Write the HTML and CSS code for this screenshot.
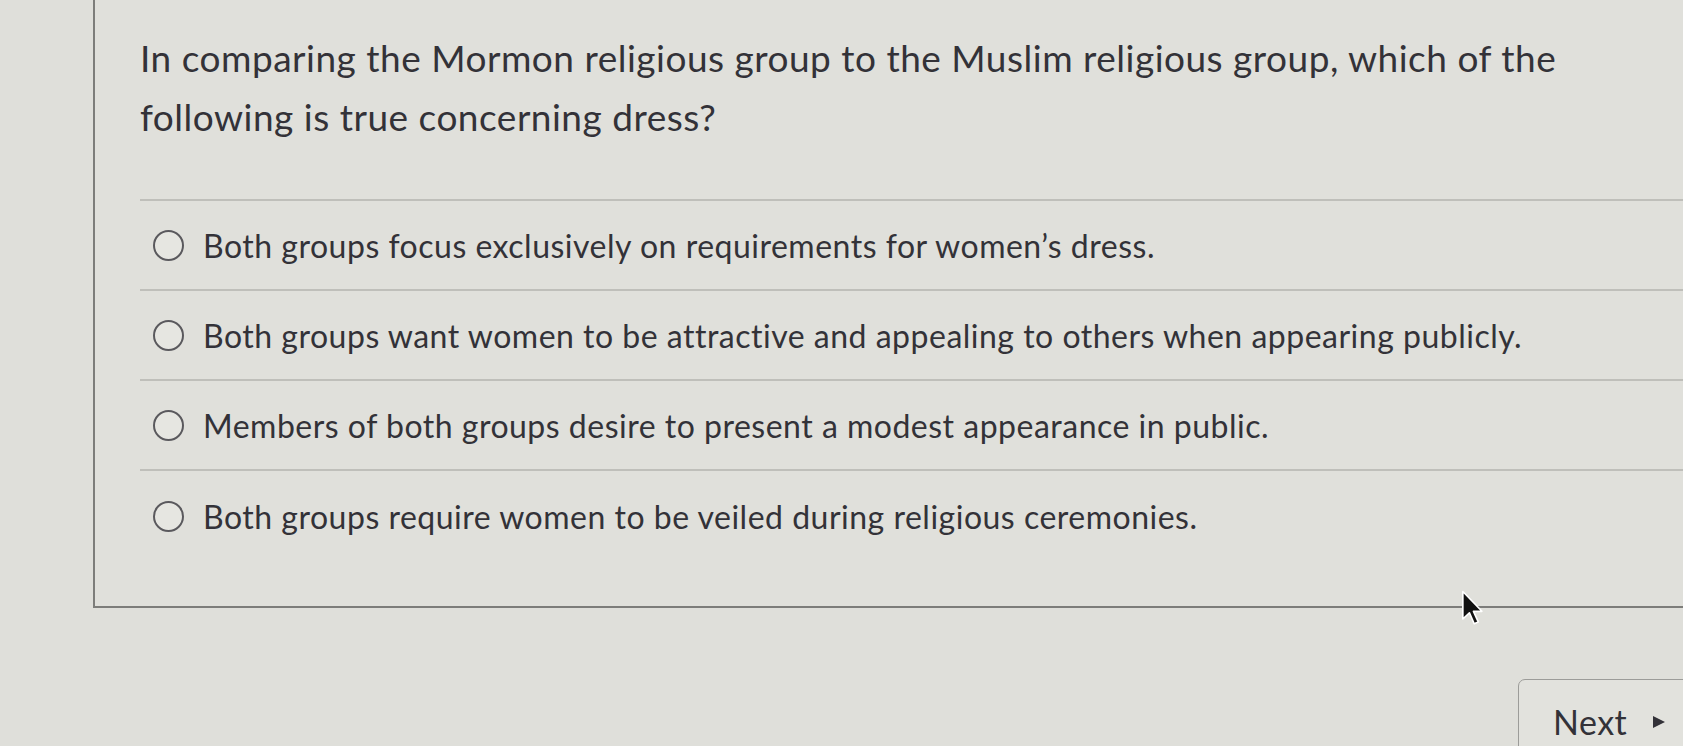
FILE: index.html
```html
<!DOCTYPE html>
<html lang="en">
<head>
<meta charset="utf-8">
<title>Question</title>
<link rel="stylesheet" href="styles.css">
</head>
<body>
<div class="page">
  <div class="card">
    <p class="question">In comparing the Mormon religious group to the Muslim religious group, which of the following is true concerning dress?</p>
    <ul class="options">
      <li class="option"><span class="radio"></span><span class="label">Both groups focus exclusively on requirements for women’s dress.</span></li>
      <li class="option"><span class="radio"></span><span class="label">Both groups want women to be attractive and appealing to others when appearing publicly.</span></li>
      <li class="option"><span class="radio"></span><span class="label">Members of both groups desire to present a modest appearance in public.</span></li>
      <li class="option"><span class="radio"></span><span class="label">Both groups require women to be veiled during religious ceremonies.</span></li>
    </ul>
  </div>
  <div class="footer">
    <button class="next">Next <svg class="tri" width="12" height="12" viewBox="0 0 12 12"><path d="M0 0 L12 6 L0 12 Z" fill="#333238"/></svg></button>
  </div>
</div>
<svg class="cursor" width="22" height="38" viewBox="0 0 12 20"><path d="M1 1 L1 16 L4.6 12.6 L7.2 18.6 L9.4 17.6 L6.8 11.8 L11.4 11.8 Z" fill="#111" stroke="#fff" stroke-width="0.9" stroke-linejoin="round"/></svg>
</body>
</html>
```

FILE: styles.css
```css
html, body {
  margin: 0;
  padding: 0;
  height: 100%;
  overflow: hidden;
  background: #dfdfda;
}
body {
  font-family: Lato, "Open Sans", sans-serif;
  color: #333238;
  position: relative;
}
.page {
  padding-left: 93px;
}
.card {
  width: 1650px;
  height: 608px;
  box-sizing: border-box;
  border-left: 2px solid #7d7d7a;
  border-bottom: 2px solid #7d7d7a;
  padding-left: 45px;
  background: #e0e0db;
}
.question {
  margin: 0;
  padding-top: 28px;
  font-size: 37px;
  letter-spacing: 0.5px;
  line-height: 59px;
  width: 1460px;
}
.options {
  list-style: none;
  margin: 53px 0 0 0;
  padding: 0;
  border-top: 2px solid #bfbfba;
}
.option {
  height: 90px;
  box-sizing: border-box;
  display: flex;
  align-items: center;
  padding-left: 13px;
  gap: 19px;
  font-size: 32px;
  letter-spacing: 0.5px;
  border-bottom: 2px solid #bfbfba;
}
.option:last-child {
  border-bottom: none;
}
.radio {
  width: 27px;
  height: 27px;
  border: 2.3px solid #5a595d;
  border-radius: 50%;
  flex: none;
  background: #e6e6e1;
}
.footer {
  display: flex;
  justify-content: flex-end;
  margin-top: 71px;
}
.next {
  font-family: Lato, "Open Sans", sans-serif;
  font-size: 34px;
  letter-spacing: 0.5px;
  line-height: 40px;
  color: #333238;
  background: #e2e2dd;
  border: 1.5px solid #9c9c99;
  border-radius: 7px;
  width: 200px;
  margin-right: -35px;
  text-align: left;
  padding: 22px 0 17px 34px;
  display: flex;
  align-items: center;
  gap: 26px;
}
.tri {
  flex: none;
}
.cursor {
  position: absolute;
  left: 1461px;
  top: 589px;
}
```
